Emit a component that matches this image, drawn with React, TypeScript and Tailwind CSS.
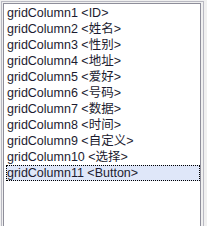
import React from "react";

const items = [
  "gridColumn1 <ID>",
  "gridColumn2 <姓名>",
  "gridColumn3 <性别>",
  "gridColumn4 <地址>",
  "gridColumn5 <爱好>",
  "gridColumn6 <号码>",
  "gridColumn7 <数据>",
  "gridColumn8 <时间>",
  "gridColumn9 <自定义>",
  "gridColumn10 <选择>",
  "gridColumn11 <Button>",
];

export default function App() {
  return (
    <div
      className="w-[207px] h-[226px] bg-[#f0f0f0] pl-px pt-px pr-[3px] overflow-hidden"
      style={{ fontFamily: '"Liberation Sans", "Noto Sans CJK SC", sans-serif' }}
    >
      <div className="h-full border-l border-t border-r border-[#b9b9c2] pl-px pt-px pr-[2px]">
        <div className="h-full border-l border-t border-r border-[#8e8e9a] bg-white pl-[2px] pt-px">
          {items.map((t, i) => {
            const sel = i === items.length - 1;
            return (
              <div
                key={t}
                className={
                  sel
                    ? "h-4 leading-[14px] text-[12.5px] text-[#1c1c30] whitespace-nowrap bg-[#dfe7f9] border border-dotted border-black"
                    : "h-4 leading-4 text-[12.5px] text-[#1c1c30] whitespace-nowrap pl-px"
                }
              >
                {t}
              </div>
            );
          })}
        </div>
      </div>
    </div>
  );
}
